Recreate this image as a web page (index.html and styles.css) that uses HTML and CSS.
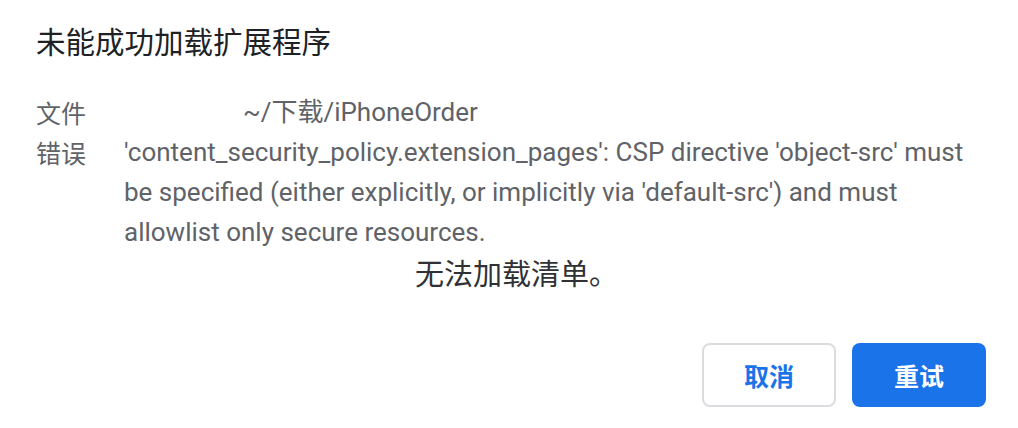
FILE: index.html
```html
<!DOCTYPE html>
<html lang="zh-CN">
<head>
<meta charset="utf-8">
<link rel="stylesheet" href="styles.css">
</head>
<body>
<div class="dialog">
  <h1 class="title">未能成功加载扩展程序</h1>
  <div class="details">
    <div class="label">文件</div>
    <div class="value path">~/下载/iPhoneOrder</div>
    <div class="label">错误</div>
    <div class="value">'content_security_policy.extension_pages': CSP directive 'object-src' must be specified (either explicitly, or implicitly via 'default-src') and must allowlist only secure resources.</div>
    <div class="label"></div>
    <div class="value manifest">无法加载清单。</div>
  </div>
  <div class="actions">
    <button class="btn btn-cancel">取消</button>
    <button class="btn btn-retry">重试</button>
  </div>
</div>
</body>
</html>
```
FILE: styles.css
```css
html, body {
  margin: 0;
  padding: 0;
  background: #ffffff;
}
body {
  width: 1018px;
  height: 428px;
  overflow: hidden;
  font-family: Roboto, "Noto Sans CJK SC", sans-serif;
}
.dialog {
  box-sizing: border-box;
  height: 428px;
  padding: 23px 32px 21px 36px;
  display: flex;
  flex-direction: column;
}
.title {
  margin: 0;
  font-size: 29.5px;
  font-weight: 400;
  line-height: 40px;
  color: #202124;
}
.details {
  margin-top: 29px;
  display: grid;
  grid-template-columns: 88px 1fr;
  font-size: 26px;
  line-height: 40px;
  color: #5f6368;
}
.label {
  font-family: "Noto Sans CJK SC", sans-serif;
  font-size: 25px;
}
.path {
  padding-left: 119px;
}
.manifest {
  padding-left: 291px;
  font-family: "Noto Sans CJK SC", sans-serif;
  font-size: 29px;
  color: #303134;
}
.actions {
  margin-top: auto;
  display: flex;
  justify-content: flex-end;
  gap: 16px;
}
.btn {
  box-sizing: border-box;
  width: 134px;
  height: 64px;
  border-radius: 8px;
  font-family: "Noto Sans CJK SC", sans-serif;
  font-size: 25px;
  font-weight: 700;
  cursor: pointer;
}
.btn-cancel {
  background: #ffffff;
  border: 2px solid #dadce0;
  color: #1a73e8;
}
.btn-retry {
  background: #1a73e8;
  border: none;
  color: #ffffff;
}
```
